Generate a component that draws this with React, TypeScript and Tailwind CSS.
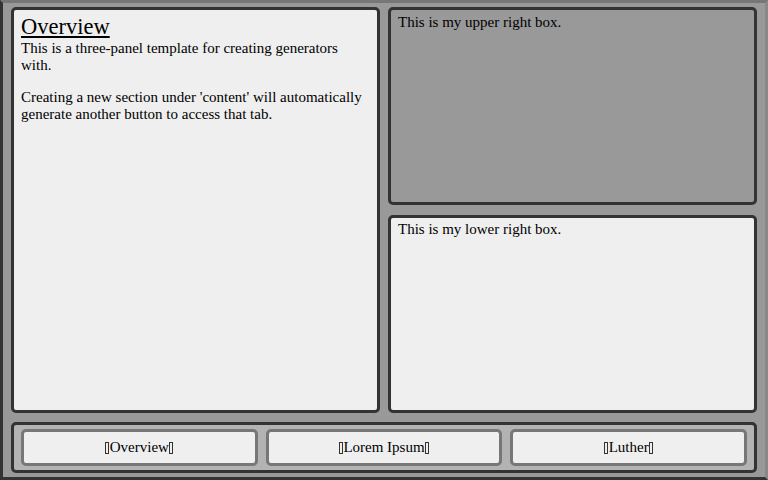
import React from "react";

const Tofu = () => (
  <span className="inline-block w-[4px] h-[12px] border border-[#333] align-[-1px] mx-[0.5px]" />
);

function Btn({ label }: { label: string }) {
  return (
    <button className="flex-1 h-[37px] bg-[#efefef] border-[3px] border-[#777] rounded-[5px] text-[15px] text-[#000] flex items-center justify-center">
      <Tofu />
      {label}
      <Tofu />
    </button>
  );
}

export default function App() {
  return (
    <div
      className="w-[768px] h-[480px] bg-[#999] border-[3px] border-t-[#777] border-l-[#333] border-b-[#333] border-r-[#888] flex flex-col px-[8px] pt-[4px] pb-[4px] text-[#000]"
      style={{ fontFamily: '"Liberation Serif", "Times New Roman", serif' }}
    >
      <div className="h-[406px] flex gap-[8px]">
        <div className="w-[369px] h-full bg-[#efefef] border-[3px] border-[#333] rounded-[5px] px-[7px] pt-[3px] text-[15px] leading-[17px]">
          <h1 className="text-[22.5px] leading-[27px] underline">Overview</h1>
          <p>This is a three-panel template for creating generators with.</p>
          <p className="mt-[15px]">
            Creating a new section under 'content' will automatically generate another button to access that tab.
          </p>
        </div>
        <div className="w-[369px] flex flex-col gap-[10px]">
          <div className="h-[198px] bg-[#999] border-[3px] border-[#333] rounded-[5px] px-[7px] pt-[4px] text-[15px] leading-[17px]">
            This is my upper right box.
          </div>
          <div className="h-[198px] bg-[#efefef] border-[3px] border-[#333] rounded-[5px] px-[7px] pt-[3px] text-[15px] leading-[17px]">
            This is my lower right box.
          </div>
        </div>
      </div>
      <div className="mt-[9px] h-[51px] bg-[#b3b3b3] border-[3px] border-[#333] rounded-[5px] flex gap-[8px] px-[7px] py-[4px]">
        <Btn label="Overview" />
        <Btn label="Lorem Ipsum" />
        <Btn label="Luther" />
      </div>
    </div>
  );
}
